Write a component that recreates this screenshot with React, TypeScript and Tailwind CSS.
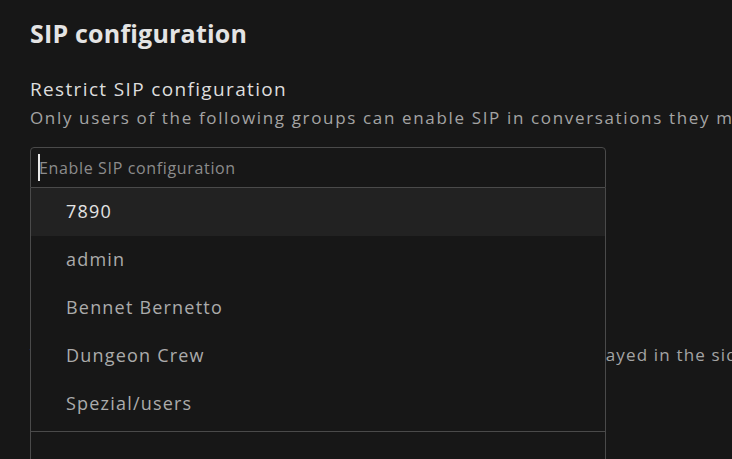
const groups = ['7890', 'admin', 'Bennet Bernetto', 'Dungeon Crew', 'Spezial/users']

export default function App() {
  return (
    <div className="h-[459px] overflow-hidden bg-[#171717] pl-[30px] pt-[18px] font-['Open_Sans',sans-serif]">
      <h2 className="text-[25px] font-bold leading-[30px] tracking-[0.2px] text-[#e4e4e4]">SIP configuration</h2>

      <h3 className="mt-[29px] text-[19px] leading-[24px] tracking-[1.35px] text-[#dedede]">Restrict SIP configuration</h3>
      <p className="mt-[5px] whitespace-nowrap text-[17px] leading-[24px] tracking-[1.65px] text-[#a4a4a4]">
        Only users of the following groups can enable SIP in conversations they moderate
      </p>

      <div className="relative mt-[17px] w-[576px]">
        <div className="flex h-[41px] items-center rounded-t-[4px] border border-[#4a4a4a] bg-[#171717] pl-[7px]">
          <span className="h-[27px] w-[2px] bg-[#e8e8e8]" />
          <span className="-ml-px text-[16px] tracking-[0.65px] text-[#8c8c8c]">Enable SIP configuration</span>
        </div>

        <div className="absolute left-0 right-0 top-[41px] z-10 border-x border-b border-[#4a4a4a] bg-[#171717] pb-[3px]">
          {groups.map((g, i) => (
            <div
              key={g}
              className={
                i === 0
                  ? 'flex h-[48px] items-center bg-[#222222] pb-[2px] pl-[35px] text-[18px] tracking-[1.2px] text-[#e4e4e4]'
                  : 'flex h-[48px] items-center pb-[2px] pl-[35px] text-[18px] tracking-[1.2px] text-[#ababab]'
              }
            >
              {g}
            </div>
          ))}
        </div>
      </div>

      <h3 className="mt-[131px] text-[19px] leading-[24px] tracking-[1.35px] text-[#dedede]">Dial-in information</h3>
      <p className="whitespace-nowrap text-[17px] leading-[24px] tracking-[1.15px] text-[#a4a4a4]">
        This information will be sent in invitation emails as well as displayed in the sidebar to all participants.
      </p>
      <div className="mt-[12px] h-[120px] w-[576px] rounded-[4px] border border-[#4a4a4a]" />
    </div>
  )
}
